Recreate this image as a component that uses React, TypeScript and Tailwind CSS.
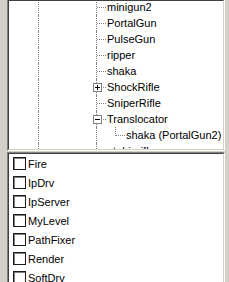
import React from 'react'

type TreeRow = {
  label: string
  box?: '+' | '-'
  child?: boolean
}

const rows: TreeRow[] = [
  { label: 'minigun2' },
  { label: 'PortalGun' },
  { label: 'PulseGun' },
  { label: 'ripper' },
  { label: 'shaka' },
  { label: 'ShockRifle', box: '+' },
  { label: 'SniperRifle' },
  { label: 'Translocator', box: '-' },
  { label: 'shaka (PortalGun2)', child: true },
  { label: 'ut_biorifle' },
]

const modules = ['Fire', 'IpDrv', 'IpServer', 'MyLevel', 'PathFixer', 'Render', 'SoftDrv']

function ExpandBox({ kind }: { kind: '+' | '-' }) {
  return (
    <div className="absolute left-[-4px] top-[4px] w-[9px] h-[9px] border border-[#808080] bg-white">
      <span className="absolute left-[1px] top-[3px] w-[5px] h-[1px] bg-black" />
      {kind === '+' && <span className="absolute left-[3px] top-[1px] w-[1px] h-[5px] bg-black" />}
    </div>
  )
}

function Row({ row }: { row: TreeRow }) {
  return (
    <div className="flex h-4 items-stretch">
      <div className="w-[29px] shrink-0" />
      <div className="w-[58px] shrink-0 border-l border-dotted border-[#808080]" />
      {row.child ? (
        <>
          <div className="w-[19px] shrink-0 border-l border-dotted border-[#808080]" />
          <div className="w-[10px] shrink-0">
            <div className="h-[9px] border-l border-b border-dotted border-[#808080]" />
          </div>
        </>
      ) : (
        <div className="relative w-[10px] shrink-0 flex items-center border-l border-dotted border-[#808080]">
          <div className="w-[9px] border-t border-dotted border-[#808080]" />
          {row.box && <ExpandBox kind={row.box} />}
        </div>
      )}
      <span className="pl-[1px] leading-4 whitespace-nowrap">{row.label}</span>
    </div>
  )
}

function CheckBox() {
  return (
    <div className="w-[13px] h-[13px] shrink-0 border border-[#1c1c1c] bg-white">
      <div className="w-full h-full border-t border-l border-[#808080] border-b-transparent border-r-transparent" />
    </div>
  )
}

export default function App() {
  return (
    <div
      className="w-[229px] h-[282px] overflow-hidden bg-[#d4d0c8] pl-[7px] pr-[4px] flex flex-col text-[11px] text-black"
      style={{ fontFamily: '"Liberation Sans", Arial, sans-serif' }}
    >
      {/* tree view */}
      <div className="h-[151px] shrink-0 border-l border-l-[#808080] border-b border-b-white border-r border-r-white">
        <div className="h-full overflow-hidden bg-white border-t border-t-[#404040] border-l border-l-[#404040] border-b border-b-[#d4d0c8] border-r border-r-[#d4d0c8]">
          <div className="-mt-[2px]">
            {rows.map((r, i) => (
              <Row key={i} row={r} />
            ))}
          </div>
        </div>
      </div>

      {/* module check list */}
      <div className="mt-[1px] flex-1 min-h-0 border-t border-l border-t-[#808080] border-l-[#808080] border-r border-r-white">
        <div className="h-full overflow-hidden bg-white border-t border-l border-t-[#404040] border-l-[#404040] border-r border-r-[#d4d0c8]">
          {modules.map(m => (
            <div key={m} className="flex h-[19px] items-center pl-[4px] gap-[2px]">
              <CheckBox />
              <span className="whitespace-nowrap leading-4">{m}</span>
            </div>
          ))}
        </div>
      </div>
    </div>
  )
}
